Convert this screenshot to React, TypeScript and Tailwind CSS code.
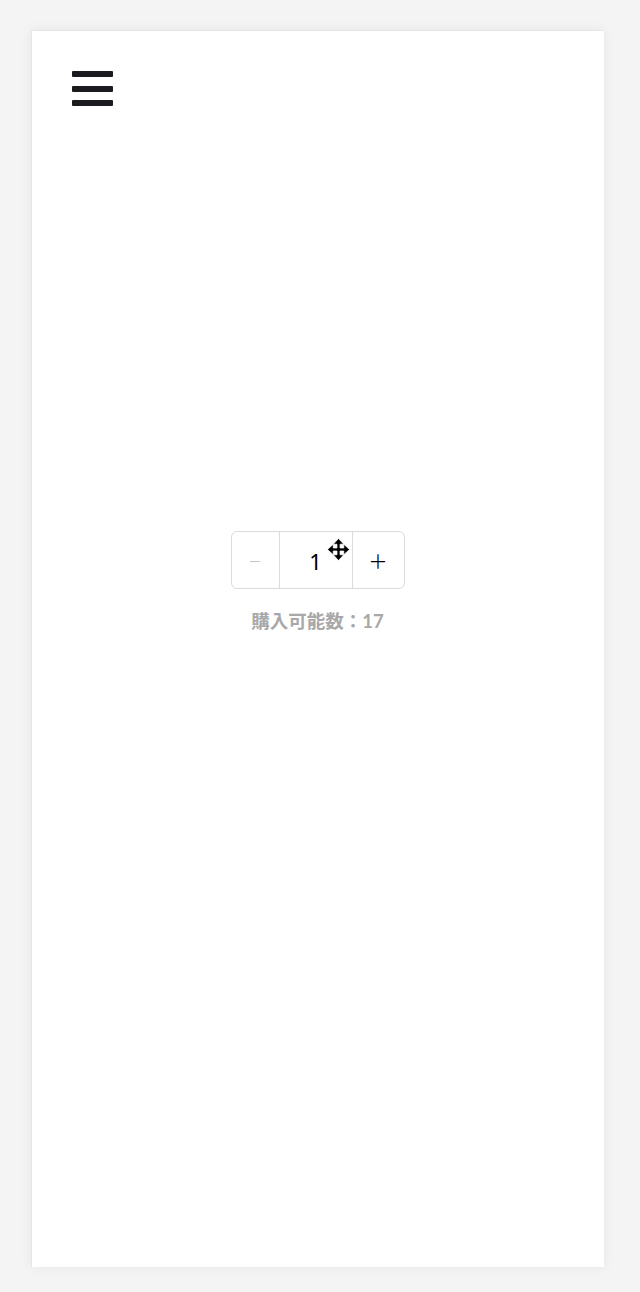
import { useState } from 'react';

export default function App() {
  const [qty, setQty] = useState(1);
  const max = 17;

  return (
    <div className="min-h-[1292px] w-[640px] bg-[#f4f4f4] pt-[30px] pl-[31px]">
      {/* Card */}
      <div className="relative flex h-[1237px] w-[573px] flex-col border-t border-l border-[#e6e6e6] bg-white shadow-[0_0_12px_rgba(0,0,0,0.06)]">
        {/* Menu button */}
        <div className="pl-[40px] pt-[40px]">
          <button className="flex w-[41px] flex-col gap-[8.5px]" aria-label="menu">
            <span className="block h-[6px] w-[41px] rounded-[1px] bg-[#1b1b1f]" />
            <span className="block h-[6px] w-[41px] rounded-[1px] bg-[#1b1b1f]" />
            <span className="block h-[6px] w-[41px] rounded-[1px] bg-[#1b1b1f]" />
          </button>
        </div>

        {/* Quantity stepper */}
        <div className="flex flex-col items-center pt-[425px] pr-[1px]">
          <div className="relative flex h-[58px] w-[174px] rounded-[6px] border border-[#dcdcdc] bg-white font-['Lato','Noto_Sans_CJK_JP',sans-serif]">
            <button
              className="flex w-[48px] items-center justify-center border-r border-[#dcdcdc] text-[24px] font-light text-[#c4c4c4]"
              onClick={() => setQty(Math.max(1, qty - 1))}
            >
              −
            </button>
            <div className="flex w-[72px] items-center justify-center pt-[2px] font-['Noto_Sans',sans-serif] text-[22px] text-black">
              {qty}
            </div>
            <button
              className="flex flex-1 items-center justify-center border-l border-[#dcdcdc] text-[30px] font-light text-black"
              onClick={() => setQty(Math.min(max, qty + 1))}
            >
              +
            </button>

            {/* pointer captured in the screenshot */}
            <svg
              className="pointer-events-none absolute left-[95px] top-[6px]"
              width="23"
              height="23"
              viewBox="0 0 24 24"
            >
              <path
                d="M12 0.5 L17.5 6.5 L13.6 6.5 L13.6 10.4 L17.5 10.4 L17.5 6.5 L23.5 12 L17.5 17.5 L17.5 13.6 L13.6 13.6 L13.6 17.5 L17.5 17.5 L12 23.5 L6.5 17.5 L10.4 17.5 L10.4 13.6 L6.5 13.6 L6.5 17.5 L0.5 12 L6.5 6.5 L6.5 10.4 L10.4 10.4 L10.4 6.5 L6.5 6.5 Z"
                fill="#000"
                stroke="#fff"
                strokeWidth="0.8"
                strokeLinejoin="round"
              />
            </svg>
          </div>
          <p className="mt-[19px] font-['Lato','Noto_Sans_CJK_JP',sans-serif] text-[18.5px] font-bold text-[#a8a8a8]">
            購入可能数：{max}
          </p>
        </div>
      </div>
    </div>
  );
}
